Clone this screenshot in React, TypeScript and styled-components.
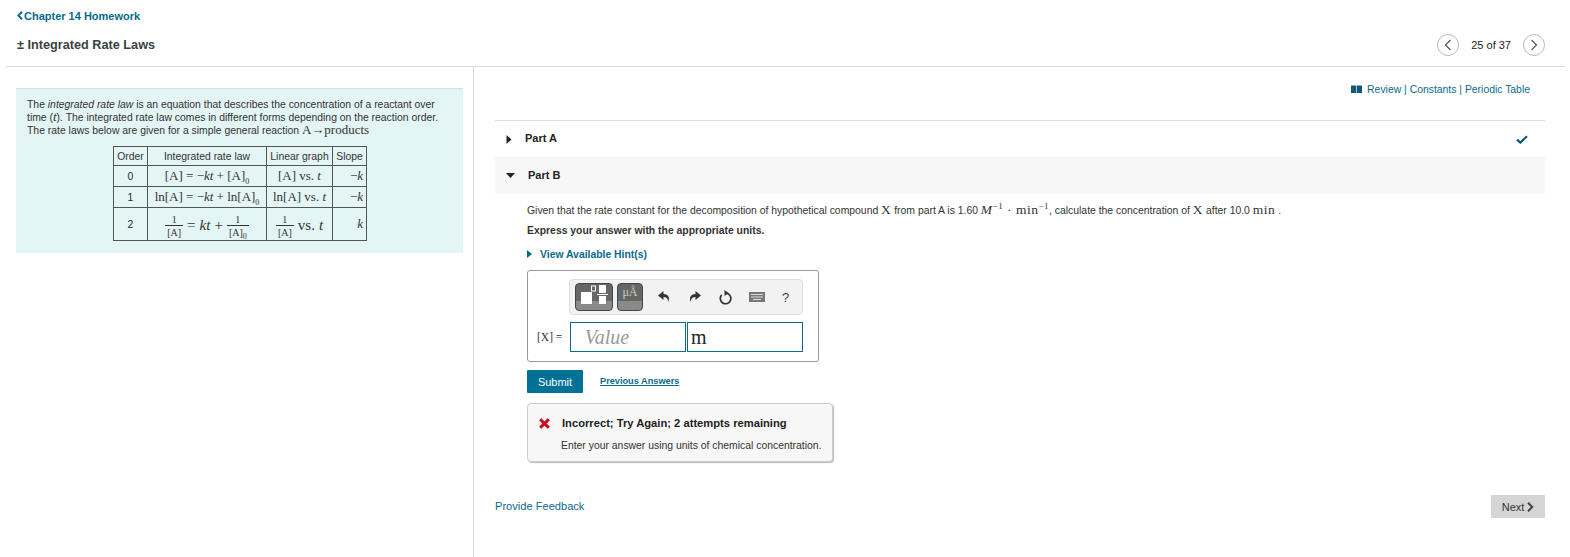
import React from 'react'
import styled, { createGlobalStyle } from 'styled-components'

const GlobalStyle = createGlobalStyle`
  html, body {
    margin: 0;
    padding: 0;
    background: #fff;
    font-family: "Liberation Sans", Arial, sans-serif;
    color: #2b2b2b;
  }
`

const Frac: React.FC<{ den: React.ReactNode }> = ({ den }) => (
  <Fraction>
    <FracNum>1</FracNum>
    <FracDen>{den}</FracDen>
  </Fraction>
)

const App: React.FC = () => (
  <Page>
    <GlobalStyle />
    <Header>
      <BackLink>
        <svg width="6" height="9" viewBox="0 0 6 9">
          <path d="M5 .8 1.300 4.500 5 8.200" fill="none" stroke="#0b6a8c" strokeWidth="2" />
        </svg>
        Chapter 14 Homework
      </BackLink>
      <TitleRow>
        <Title>± Integrated Rate Laws</Title>
        <Pager>
          <RoundButton>
            <svg width="8" height="12" viewBox="0 0 8 12">
              <path d="M6.500 1 1.500 6l5 5" fill="none" stroke="#555" strokeWidth="1.200" />
            </svg>
          </RoundButton>
          <PagerText>25 of 37</PagerText>
          <RoundButton>
            <svg width="8" height="12" viewBox="0 0 8 12">
              <path d="M1.500 1l5 5-5 5" fill="none" stroke="#555" strokeWidth="1.200" />
            </svg>
          </RoundButton>
        </Pager>
      </TitleRow>
    </Header>

    <Columns>
      <LeftColumn>
        <IntroPanel>
          <IntroText>
            The <em>integrated rate law</em> is an equation that describes the concentration of a
            reactant over
            <br />
            time (<MathText><i>t</i></MathText>). The integrated rate law comes in different forms
            depending on the reaction order.
            <br />
            The rate laws below are given for a simple general reaction <MathText>A→products</MathText>
          </IntroText>
          <RateTable>
            <colgroup>
              <OrderCol />
              <LawCol />
              <GraphCol />
              <OrderCol />
            </colgroup>
            <thead>
              <HeadRow>
                <HeadCell>Order</HeadCell>
                <HeadCell>Integrated rate law</HeadCell>
                <HeadCell>Linear graph</HeadCell>
                <HeadCell>Slope</HeadCell>
              </HeadRow>
            </thead>
            <tbody>
              <BodyRow>
                <OrderCell>0</OrderCell>
                <MathCell>[A] = −<i>kt</i> + [A]<Sub0>0</Sub0></MathCell>
                <MathCell>[A] vs. <i>t</i></MathCell>
                <SlopeCell>−<i>k</i></SlopeCell>
              </BodyRow>
              <BodyRow>
                <OrderCell>1</OrderCell>
                <MathCell>ln[A] = −<i>kt</i> + ln[A]<Sub0>0</Sub0></MathCell>
                <MathCell>ln[A] vs. <i>t</i></MathCell>
                <SlopeCell>−<i>k</i></SlopeCell>
              </BodyRow>
              <TallRow>
                <OrderCell>2</OrderCell>
                <MathCell>
                  <BigMath>
                    <Frac den="[A]" /> = <i>kt</i> + <Frac den={<>[A]<Sub0>0</Sub0></>} />
                  </BigMath>
                </MathCell>
                <MathCell>
                  <BigMath>
                    <Frac den="[A]" /> vs. <i>t</i>
                  </BigMath>
                </MathCell>
                <SlopeCell><i>k</i></SlopeCell>
              </TallRow>
            </tbody>
          </RateTable>
        </IntroPanel>
      </LeftColumn>

      <RightColumn>
        <ResourceRow>
          <svg width="11" height="8" viewBox="0 0 11 8">
            <rect x="0" y="0.500" width="5.200" height="7.500" fill="#0f5a78" />
            <rect x="5.800" y="0.500" width="5.200" height="7.500" fill="#0f5a78" />
          </svg>
          <ResourceLinks>Review | Constants | Periodic Table</ResourceLinks>
        </ResourceRow>

        <PartRow>
          <PartToggle>
            <svg width="6" height="9" viewBox="0 0 6 9">
              <path d="M0.500 0 5.500 4.500 0.500 9z" fill="#222" />
            </svg>
          </PartToggle>
          <PartLabel>Part A</PartLabel>
          <svg width="12" height="9" viewBox="0 0 12 9">
            <path d="M1 4.600 4.300 7.600 11 1.200" fill="none" stroke="#0f5a78" strokeWidth="2.200" />
          </svg>
        </PartRow>
        <PartRow $open>
          <PartToggle>
            <svg width="9" height="5" viewBox="0 0 9 5">
              <path d="M0 0h9L4.500 5z" fill="#222" />
            </svg>
          </PartToggle>
          <PartLabel $open>Part B</PartLabel>
        </PartRow>

        <PartBody>
          <Question>
            Given that the rate constant for the decomposition of hypothetical compound{' '}
            <MathBig>X</MathBig> from part A is 1.60{' '}
            <MathBig><em>M</em><Sup>−1</Sup> · min<Sup>−1</Sup></MathBig>
            , calculate the concentration of <MathBig>X</MathBig> after 10.0 <MathBig>min</MathBig> .
          </Question>
          <Instruction>Express your answer with the appropriate units.</Instruction>
          <HintLink>
            <svg width="5" height="8" viewBox="0 0 5 8">
              <path d="M0 0 5 4 0 8z" fill="#0b6a8c" />
            </svg>
            View Available Hint(s)
          </HintLink>

          <AnswerBox>
            <Toolbar>
              <TemplateButton>
                <svg width="36" height="19" viewBox="0 0 36 19">
                  <rect x="5" y="7" width="11" height="12" fill="#fff" />
                  <rect x="15.500" y="1" width="4" height="5" fill="none" stroke="#fff" />
                  <rect x="23" y="0" width="7" height="8" fill="#fff" />
                  <rect x="21" y="9" width="11" height="1" fill="#fff" />
                  <rect x="23" y="11" width="7" height="8" fill="#fff" />
                </svg>
              </TemplateButton>
              <UnitsButton>μÅ</UnitsButton>
              <ToolIcons>
                <svg width="13" height="12" viewBox="0 0 13 12">
                  <path d="M5.500 0 0 4.500 5.500 9V6c3 0 4.500 1.500 5 5 1.500-5-.5-8-5-8z" fill="#333" />
                </svg>
                <svg width="13" height="12" viewBox="0 0 13 12">
                  <path d="M7.500 0 13 4.500 7.500 9V6c-3 0-4.500 1.500-5 5-1.500-5 .5-8 5-8z" fill="#333" />
                </svg>
                <svg width="14" height="15" viewBox="0 0 14 15">
                  <path d="M8.500 3.200A5.300 5.300 0 1 1 3.700 4.800" fill="none" stroke="#333" strokeWidth="1.700" />
                  <path d="M6.500 0v6l4-3z" fill="#333" />
                </svg>
                <svg width="16" height="10" viewBox="0 0 16 10">
                  <rect width="16" height="10" fill="#777" />
                  <path d="M2 2.500h12M2 5h12M4 7.500h8" stroke="#ddd" strokeWidth="1" />
                </svg>
                <HelpMark>?</HelpMark>
              </ToolIcons>
            </Toolbar>
            <InputRow>
              <InputLabel>[X] =</InputLabel>
              <ValueField>Value</ValueField>
              <UnitField>m</UnitField>
            </InputRow>
          </AnswerBox>

          <ActionRow>
            <SubmitButton>Submit</SubmitButton>
            <PreviousLink>Previous Answers</PreviousLink>
          </ActionRow>

          <FeedbackBox>
            <FeedbackTitle>
              <svg width="11" height="11" viewBox="0 0 11 11">
                <path d="M1.200 1.200 9.800 9.800M9.800 1.200 1.200 9.800" stroke="#d0021b" strokeWidth="3" />
              </svg>
              Incorrect; Try Again; 2 attempts remaining
            </FeedbackTitle>
            <FeedbackText>Enter your answer using units of chemical concentration.</FeedbackText>
          </FeedbackBox>
        </PartBody>

        <FooterRow>
          <FeedbackLink>Provide Feedback</FeedbackLink>
          <NextButton>
            Next
            <svg width="7" height="10" viewBox="0 0 7 10">
              <path d="M1 .8 5.200 5 1 9.200" fill="none" stroke="#444" strokeWidth="2" />
            </svg>
          </NextButton>
        </FooterRow>
      </RightColumn>
    </Columns>
  </Page>
)

const Page = styled.div`
  width: 1570px;
  height: 557px;
  overflow: hidden;
`

const Header = styled.header`
  margin: 0 5px 0 6px;
  height: 67px;
  box-sizing: border-box;
  border-bottom: 1px solid #d9dcdf;
  padding: 9px 20px 0 11px;
`

const BackLink = styled.a`
  display: flex;
  align-items: center;
  gap: 1px;
  height: 13px;
  font-size: 11px;
  font-weight: 700;
  color: #0b6a8c;
`

const TitleRow = styled.div`
  display: flex;
  justify-content: space-between;
  align-items: center;
  margin-top: 11px;
  height: 23px;
`

const Title = styled.h1`
  margin: 0;
  font-size: 12.7px;
  font-weight: 700;
  color: #3a3f44;
`

const Pager = styled.div`
  display: flex;
  align-items: center;
  gap: 12px;
`

const PagerText = styled.span`
  font-size: 11px;
  color: #222;
`

const RoundButton = styled.span`
  display: flex;
  align-items: center;
  justify-content: center;
  width: 20px;
  height: 20px;
  border: 1px solid #bbb;
  border-radius: 50%;
`

const Columns = styled.main`
  display: flex;
  height: 490px;
`

const LeftColumn = styled.section`
  width: 474px;
  flex: none;
  box-sizing: border-box;
  padding: 21px 10px 0 16px;
  border-right: 1px solid #cfd8de;
`

const IntroPanel = styled.div`
  height: 165px;
  box-sizing: border-box;
  background: #e3f5f5;
  border-top: 1px solid #d5e0e5;
  padding: 10px 11px 0;
`

const IntroText = styled.p`
  margin: 0;
  font-size: 10.4px;
  line-height: 12px;
  color: #333;
  white-space: nowrap;
`

const RateTable = styled.table`
  border-collapse: collapse;
  border: 1px solid #111;
  table-layout: fixed;
  margin: 9px 0 0 86px;
  width: 253px;
  font-size: 10.4px;
`

const OrderCol = styled.col`
  width: 34px;
`

const LawCol = styled.col`
  width: 119px;
`

const GraphCol = styled.col`
  width: 66px;
`

const HeadRow = styled.tr`
  height: 19px;
`

const BodyRow = styled.tr`
  height: 21px;
`

const TallRow = styled.tr`
  height: 33px;
`

const HeadCell = styled.th`
  font-weight: 400;
  padding: 0;
  border: 1px solid #555;
  color: #333;
  white-space: nowrap;
`

const OrderCell = styled.td`
  padding: 0;
  text-align: center;
  border: 1px solid #555;
`

const MathCell = styled.td`
  padding: 0;
  text-align: center;
  border: 1px solid #555;
  font-family: "Liberation Serif", serif;
  font-size: 13px;
  white-space: nowrap;
  color: #333;
`

const SlopeCell = styled(MathCell)`
  text-align: right;
  padding-right: 3px;
`

const BigMath = styled.span`
  display: inline-flex;
  align-items: center;
  gap: 4px;
  font-size: 15px;
`

const Fraction = styled.span`
  display: inline-flex;
  flex-direction: column;
  align-items: center;
  font-size: 10px;
  line-height: 11px;
`

const FracNum = styled.span`
  padding: 0 2px;
`

const FracDen = styled.span`
  border-top: 1px solid #333;
  padding: 1px 2px 0;
`

const Sub0 = styled.sub`
  font-size: 8px;
  line-height: 0;
`

const MathText = styled.span`
  font-family: "Liberation Serif", serif;
  font-size: 13px;
`

const RightColumn = styled.section`
  flex: 1;
  display: flex;
  flex-direction: column;
  padding: 0 25px 0 21px;
  min-width: 0;
`

const ResourceRow = styled.div`
  display: flex;
  justify-content: flex-end;
  align-items: center;
  gap: 5px;
  height: 54px;
  padding: 0 15px 9px 0;
  box-sizing: border-box;
  border-bottom: 1px solid #d9dcdf;
`

const ResourceLinks = styled.span`
  font-size: 10.4px;
  color: #0b6a8c;
`

const PartRow = styled.div<{ $open?: boolean }>`
  display: flex;
  align-items: center;
  height: ${(p) => (p.$open ? 37 : 36)}px;
  padding-right: 17px;
  background: ${(p) => (p.$open ? '#f7f7f7' : '#fff')};
`

const PartToggle = styled.span`
  display: flex;
  width: 30px;
  padding-left: 11px;
  box-sizing: border-box;
`

const PartLabel = styled.span<{ $open?: boolean }>`
  flex: 1;
  font-size: 11px;
  font-weight: 700;
  color: #222;
  padding-left: ${(p) => (p.$open ? 3 : 0)}px;
  padding-bottom: 2px;
`

const PartBody = styled.div`
  padding: 7px 0 0 32px;
`

const Question = styled.p`
  margin: 0;
  height: 18px;
  line-height: 18px;
  font-size: 10.4px;
  color: #333;
  white-space: nowrap;
`

const MathBig = styled.span`
  font-family: "Liberation Serif", serif;
  font-size: 13.5px;
  letter-spacing: 0.5px;
`

const Sup = styled.sup`
  font-size: 9px;
  line-height: 0;
`

const Instruction = styled.p`
  margin: 5px 0 0;
  font-size: 10.4px;
  line-height: 14px;
  font-weight: 700;
  color: #333;
`

const HintLink = styled.a`
  display: flex;
  align-items: center;
  gap: 8px;
  margin-top: 9px;
  height: 14px;
  font-size: 10.4px;
  font-weight: 700;
  color: #0b6a8c;
`

const AnswerBox = styled.div`
  margin-top: 9px;
  width: 292px;
  height: 92px;
  box-sizing: border-box;
  border: 1px solid #999;
  border-radius: 3px;
  padding: 8px 15px 0 9px;
`

const Toolbar = styled.div`
  display: flex;
  align-items: center;
  gap: 4px;
  margin-left: 32px;
  width: 234px;
  height: 36px;
  box-sizing: border-box;
  padding: 0 5px;
  background: #f2f2f2;
  border: 1px solid #ddd;
  border-radius: 4px;
`

const TemplateButton = styled.span`
  display: flex;
  align-items: flex-start;
  justify-content: center;
  padding-top: 1px;
  box-sizing: border-box;
  width: 38px;
  height: 28px;
  border: 1px solid #444;
  border-radius: 4px;
  background: linear-gradient(#666 0 65%, #8a8a8a 65% 100%);
`

const UnitsButton = styled(TemplateButton)`
  width: 26px;
  font-family: "Liberation Serif", serif;
  font-size: 12px;
  color: #ccc;
`

const ToolIcons = styled.span`
  display: flex;
  align-items: center;
  gap: 17px;
  margin-left: 11px;
`

const HelpMark = styled.span`
  font-size: 13px;
  color: #444;
`

const InputRow = styled.div`
  display: flex;
  align-items: center;
  margin-top: 7px;
`

const InputLabel = styled.span`
  width: 33px;
  font-family: "Liberation Serif", serif;
  font-size: 11.5px;
  color: #333;
`

const ValueField = styled.div`
  width: 117px;
  height: 30px;
  box-sizing: border-box;
  border: 1px solid #0b6a8c;
  padding-left: 14px;
  font-family: "Liberation Serif", serif;
  font-style: italic;
  font-size: 20px;
  line-height: 28px;
  color: #999;
`

const UnitField = styled(ValueField)`
  margin-left: 1px;
  padding-left: 3px;
  font-style: normal;
  color: #222;
`

const ActionRow = styled.div`
  display: flex;
  align-items: center;
  gap: 17px;
  margin-top: 8px;
`

const SubmitButton = styled.span`
  display: flex;
  align-items: center;
  justify-content: center;
  width: 56px;
  height: 23px;
  background: #007196;
  border-radius: 1px;
  font-size: 11px;
  color: #fff;
`

const PreviousLink = styled.a`
  margin-bottom: 2px;
  font-size: 9.200px;
  font-weight: 700;
  color: #0b6a8c;
  text-decoration: underline;
`

const FeedbackBox = styled.div`
  margin-top: 10px;
  width: 306px;
  height: 59px;
  box-sizing: border-box;
  background: #f7f7f7;
  border: 1px solid #ccc;
  border-radius: 4px;
  box-shadow: 1px 1px 1px #bbb;
  padding: 12px 0 0 11px;
`

const FeedbackTitle = styled.div`
  display: flex;
  align-items: center;
  gap: 12px;
  height: 14px;
  font-size: 11.200px;
  font-weight: 700;
  color: #222;
`

const FeedbackText = styled.div`
  margin: 10px 0 0 22px;
  font-size: 10.4px;
  color: #333;
`

const FooterRow = styled.div`
  display: flex;
  justify-content: space-between;
  align-items: center;
  margin-top: 33px;
`

const FeedbackLink = styled.a`
  font-size: 11.100px;
  color: #0b6a8c;
  margin-bottom: 2px;
`

const NextButton = styled.span`
  display: flex;
  align-items: center;
  justify-content: center;
  gap: 3px;
  width: 54px;
  height: 23px;
  background: #d5d5d5;
  border-radius: 1px;
  font-size: 11px;
  color: #333;
`

export default App
